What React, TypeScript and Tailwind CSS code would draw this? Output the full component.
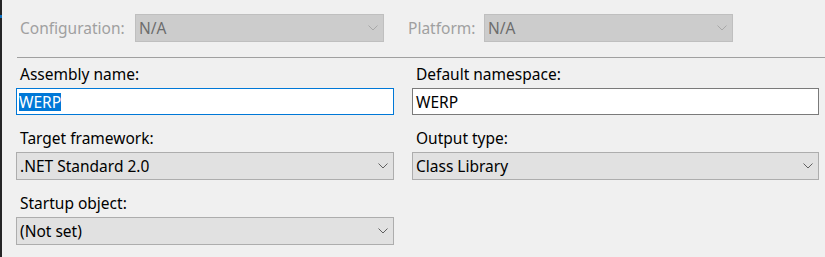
import React from "react";

function Chevron({ disabled }: { disabled?: boolean }) {
  return (
    <svg width="10" height="6" viewBox="0 0 10 6" className="shrink-0">
      <polyline
        points="0.5,0.5 5,5 9.5,0.5"
        fill="none"
        stroke={disabled ? "#a8a8a8" : "#606060"}
        strokeWidth="1"
      />
    </svg>
  );
}

function Select({
  value,
  disabled,
  className = "",
}: {
  value: string;
  disabled?: boolean;
  className?: string;
}) {
  return (
    <div
      className={`flex h-[28px] items-center justify-between border pl-[3px] pr-[5px] ${
        disabled
          ? "border-[#bfbfbf] bg-[#cccccc] text-[#6d6d6d]"
          : "border-[#adadad] bg-[#e1e1e1] text-black"
      } ${className}`}
    >
      <span className="pt-[2px] leading-none">{value}</span>
      <Chevron disabled={disabled} />
    </div>
  );
}

function Field({ label, children }: { label: string; children: React.ReactNode }) {
  return (
    <div className="flex flex-col gap-[4px]">
      <div className="h-[21px] pl-[4px] pt-[1px] leading-[20px]">{label}</div>
      {children}
    </div>
  );
}

export default function App() {
  return (
    <div
      className="flex h-[257px] w-[825px] overflow-hidden bg-[#f0f0f0] text-[15.5px] text-black"
      style={{ fontFamily: '"Noto Sans", "Noto Sans CJK SC", sans-serif' }}
    >
      <div className="flex w-[2px] flex-col bg-[#252526]">
        <div className="mt-[15px] h-[3px] bg-[#0e70c0]" />
      </div>

      <div className="flex flex-1 flex-col">
        {/* configuration row */}
        <div className="mt-[14px] flex h-[28px] items-center text-[#a0a0a0]">
          <div className="w-[133px] pl-[18px] pt-[1px]">Configuration:</div>
          <Select value="N/A" disabled className="w-[249px]" />
          <div className="w-[100px] pl-[24px] pt-[1px]">Platform:</div>
          <Select value="N/A" disabled className="w-[249px]" />
        </div>

        <div className="ml-[15px] mt-[15px] h-[1px] bg-[#a0a0a0]" />

        <div className="ml-[14px] mt-[5px] grid grid-cols-[378px_407px] gap-x-[18px] gap-y-[12px]">
          <Field label="Assembly name:">
            <div className="flex h-[27px] items-center border border-[#0078d7] bg-white pl-[2px]">
              <span className="bg-[#0078d7] leading-[18px] text-white">WERP</span>
            </div>
          </Field>
          <Field label="Default namespace:">
            <div className="flex h-[27px] items-center border border-[#7a7a7a] bg-white pl-[3px]">
              <span className="leading-[18px]">WERP</span>
            </div>
          </Field>

          <Field label="Target framework:">
            <Select value=".NET Standard 2.0" />
          </Field>
          <Field label="Output type:">
            <Select value="Class Library" />
          </Field>

          <Field label="Startup object:">
            <Select value="(Not set)" />
          </Field>
        </div>
      </div>
    </div>
  );
}
